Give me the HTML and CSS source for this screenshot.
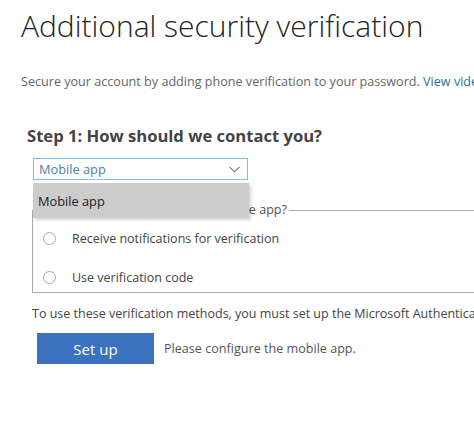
FILE: index.html
```html
<!DOCTYPE html>
<html>
<head>
<meta charset="utf-8">
<link rel="stylesheet" href="styles.css">
</head>
<body>
<div class="page">
  <h1 class="title">Additional security verification</h1>
  <p class="intro">Secure your account by adding phone verification to your password. <a class="link" href="#">View video to know how to secure your account</a></p>
  <h2 class="step">Step 1: How should we contact you?</h2>
  <div class="select-wrap">
    <div class="select">
      <span class="select-value">Mobile app</span>
      <svg class="chevron" width="11" height="7" viewBox="0 0 11 7"><path d="M0.5 0.8 L5.5 5.8 L10.5 0.8" fill="none" stroke="#777" stroke-width="1.1"/></svg>
    </div>
    <div class="dropdown"><span class="option">Mobile app</span></div>
  </div>
  <fieldset class="methods">
    <legend class="legend">How do you want to use the mobile app?</legend>
    <label class="radio-row"><span class="radio"></span><span class="radio-label">Receive notifications for verification</span></label>
    <label class="radio-row"><span class="radio"></span><span class="radio-label">Use verification code</span></label>
  </fieldset>
  <p class="note">To use these verification methods, you must set up the Microsoft Authenticator app.</p>
  <div class="actions">
    <button class="btn">Set up</button>
    <span class="status">Please configure the mobile app.</span>
  </div>
</div>
</body>
</html>
```
FILE: styles.css
```css
html, body {
  margin: 0;
  padding: 0;
  background: #fff;
  overflow: hidden;
}
body {
  width: 474px;
  height: 427px;
  font-family: "Open Sans", "Noto Sans", sans-serif;
}
.page {
  padding-left: 21px;
  white-space: nowrap;
}
.title {
  margin: 0;
  padding-top: 6px;
  font-size: 30px;
  line-height: 40px;
  font-weight: 300;
  color: #222;
}
.intro {
  margin: 27px 0 0 0;
  font-size: 12.6px;
  line-height: 18px;
  color: #666;
}
.link {
  color: #2f6d9c;
  text-decoration: none;
}
.step {
  margin: 34px 0 0 6px;
  font-size: 16.6px;
  line-height: 22px;
  font-weight: 700;
  color: #444;
}
.select-wrap {
  position: relative;
  margin: 11px 0 0 12px;
  width: 216px;
  z-index: 2;
}
.select {
  box-sizing: border-box;
  height: 22px;
  width: 215px;
  border: 1px solid #7cc1e2;
  display: flex;
  align-items: center;
  justify-content: space-between;
  padding: 0 5px 0 5px;
}
.select-value {
  font-size: 12.8px;
  color: #4f7fa3;
}
.chevron {
  margin-right: 2px;
}
.dropdown {
  position: absolute;
  left: 0;
  top: 25px;
  width: 216px;
  height: 35px;
  background: #cccccc;
  box-shadow: 2px 2px 3px rgba(0,0,0,0.18);
  display: flex;
  align-items: center;
  padding-left: 5px;
  box-sizing: border-box;
}
.option {
  font-size: 12.8px;
  color: #222;
}
.methods {
  margin: 22px 0 0 11px;
  width: 600px;
  border: 1px solid #aaa;
  padding: 0 0 0 10px;
  box-sizing: border-box;
  position: relative;
  z-index: 1;
  display: flex;
  flex-direction: column;
  gap: 9px;
}
.legend {
  font-size: 12.6px;
  color: #555;
  padding: 0 2px;
  margin-left: 3px;
  line-height: 16px;
}
.radio-row {
  display: flex;
  align-items: center;
  height: 30px;
}
.radio-row:first-of-type {
  margin-top: 5px;
}
.radio {
  width: 13px;
  height: 13px;
  border: 1px solid #aaa;
  border-radius: 50%;
  box-sizing: border-box;
  margin-right: 16px;
  flex: none;
}
.radio-label {
  font-size: 12.5px;
  color: #444;
}
.note {
  margin: 12px 0 0 11px;
  font-size: 12.5px;
  line-height: 18px;
  color: #444;
}
.actions {
  margin: 10px 0 0 16px;
  display: flex;
  align-items: center;
}
.btn {
  width: 117px;
  height: 31px;
  border: none;
  background: #3a72bf;
  color: #fff;
  font-family: inherit;
  font-size: 15px;
  padding: 0;
  margin: 0 10px 0 0;
}
.status {
  font-size: 12.6px;
  color: #555;
}
```
